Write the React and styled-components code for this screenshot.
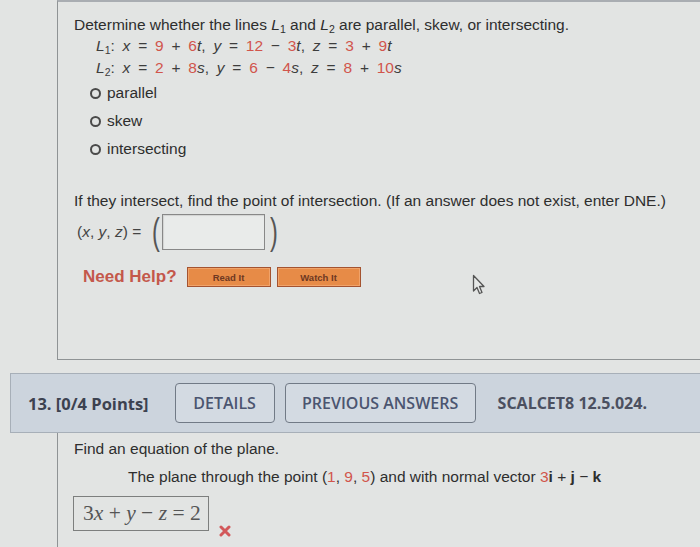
import React from "react";
import styled, { createGlobalStyle } from "styled-components";

const GlobalStyle = createGlobalStyle`
  body {
    margin: 0;
    background: #e2e4e3;
    font-family: "Liberation Sans", Arial, sans-serif;
    color: #2e2e2e;
  }
`;

const Page = styled.div`
  width: 700px;
  height: 547px;
  overflow: hidden;
  display: flex;
  flex-direction: column;
`;

const Panel = styled.div`
  position: relative;
  margin-left: 57px;
  border-left: 1px solid #8f9395;
  border-top: ${(props) => (props.top ? "2px solid #a9adb2" : "none")};
  border-bottom: ${(props) => (props.bottom ? "1px solid #8f9395" : "none")};
  padding: ${(props) => props.padding || "0"};
  padding-left: 16px;
  display: flex;
  flex-direction: column;
  flex: ${(props) => (props.grow ? "1" : "none")};
`;

const Text = styled.div`
  font-size: 15.5px;
  line-height: 20px;
  color: #2e2e2e;
  margin: ${(props) => props.margin || "0"};
  white-space: nowrap;
`;

const Var = styled.i`
  font-style: italic;
`;

const Sub = styled.sub`
  font-size: 10.5px;
  font-style: normal;
  line-height: 0;
  vertical-align: -3px;
`;

const Red = styled.span`
  color: #d1554c;
`;

const Bold = styled.b`
  font-weight: 700;
`;

const Equations = styled.div`
  margin-left: 22px;
  display: flex;
  flex-direction: column;
`;

const EqLine = styled.div`
  font-size: 15.5px;
  line-height: 22px;
  height: 22px;
  color: #3d3d3d;
  word-spacing: 3.5px;
  white-space: nowrap;
`;

const Options = styled.div`
  display: flex;
  flex-direction: column;
  margin-left: 16px;
`;

const Option = styled.label`
  display: flex;
  align-items: center;
  gap: 6px;
  height: 28px;
  font-size: 15.5px;
  color: #2e2e2e;
`;

const Radio = styled.span`
  width: 7px;
  height: 7px;
  border: 2px solid #4a4a4a;
  border-radius: 50%;
`;

const AnswerRow = styled.div`
  display: flex;
  align-items: center;
  height: 38px;
  margin: 2px 0 0 3px;
  font-size: 15.5px;
  color: #444;
  white-space: pre;
`;

const Paren = styled.span`
  font-size: 36px;
  font-weight: 300;
  line-height: 38px;
  color: #555;
  margin: ${(props) => props.margin || "0"};
  transform: scaleX(0.65);
`;

const InputBox = styled.div`
  width: 101px;
  height: 34px;
  border: 1px solid #888;
  background: #e9ebea;
  box-shadow: inset 1px 1px 1px rgba(0, 0, 0, 0.1);
`;

const HelpRow = styled.div`
  display: flex;
  align-items: center;
  height: 24px;
  margin: 14px 0 0 9px;
`;

const HelpLabel = styled.span`
  font-size: 17px;
  font-weight: 700;
  color: #c4584b;
  margin-right: 10px;
`;

const HelpButton = styled.span`
  width: 82px;
  height: 18px;
  margin-right: 6px;
  display: flex;
  align-items: center;
  justify-content: center;
  background: #e78b47;
  border: 1px solid #a45330;
  box-shadow: inset 0 0 0 1px #f0a36a;
  font-size: 9.5px;
  font-weight: 700;
  color: #6e3822;
`;

const Cursor = styled.svg`
  position: absolute;
  left: 414px;
  top: 272px;
`;

const Header = styled.div`
  margin: 13px 0 0 10px;
  height: 58px;
  background: #ccd4dd;
  border: 1px solid #a7afb8;
  border-right: none;
  display: flex;
  align-items: center;
  padding-left: 17px;
  font-family: "Open Sans", "Liberation Sans", sans-serif;
`;

const QNumber = styled.span`
  font-size: 16.5px;
  font-weight: 700;
  color: #3c4250;
  margin-right: 26px;
  white-space: nowrap;
`;

const HeaderButton = styled.span`
  width: ${(props) => props.w}px;
  height: 38px;
  display: flex;
  align-items: center;
  justify-content: center;
  border: 1px solid #717a86;
  border-radius: 4px;
  background: #d3dae2;
  font-size: 16px;
  font-weight: 600;
  color: #4b5570;
  margin-right: ${(props) => props.mr || "0"};
  white-space: nowrap;
`;

const Source = styled.span`
  font-size: 16px;
  font-weight: 700;
  color: #4b5060;
  white-space: nowrap;
`;

const MathAnswerRow = styled.div`
  display: flex;
  align-items: flex-end;
  margin-top: 9px;
`;

const MathBox = styled.div`
  height: 33px;
  border: 1px solid #7d7f7e;
  padding: 0 7px 0 9px;
  display: flex;
  align-items: center;
  margin-left: -1px;
  font-family: "Liberation Serif", "Times New Roman", serif;
  font-size: 21.5px;
  color: #555;
  white-space: nowrap;
`;

const MathVar = styled.i`
  font-style: italic;
`;

const WrongMark = styled.svg`
  margin: 0 0 -6px 10px;
`;

export default function App() {
  return (
    <Page>
      <GlobalStyle />
      <Panel top bottom padding="13px 0 70px">
        <Text>
          Determine whether the lines <Var>L<Sub>1</Sub></Var> and <Var>L<Sub>2</Sub></Var> are
          parallel, skew, or intersecting.
        </Text>
        <Equations>
          <EqLine>
            <Var>L<Sub>1</Sub></Var>: <Var>x</Var> = <Red>9</Red> + <Red>6</Red><Var>t</Var>,{" "}
            <Var>y</Var> = <Red>12</Red> − <Red>3</Red><Var>t</Var>, <Var>z</Var> ={" "}
            <Red>3</Red> + <Red>9</Red><Var>t</Var>
          </EqLine>
          <EqLine>
            <Var>L<Sub>2</Sub></Var>: <Var>x</Var> = <Red>2</Red> + <Red>8</Red><Var>s</Var>,{" "}
            <Var>y</Var> = <Red>6</Red> − <Red>4</Red><Var>s</Var>, <Var>z</Var> ={" "}
            <Red>8</Red> + <Red>10</Red><Var>s</Var>
          </EqLine>
        </Equations>
        <Options>
          <Option><Radio />parallel</Option>
          <Option><Radio />skew</Option>
          <Option><Radio />intersecting</Option>
        </Options>
        <Text margin="28px 0 0">
          If they intersect, find the point of intersection. (If an answer does not exist, enter DNE.)
        </Text>
        <AnswerRow>
          (<Var>x</Var>, <Var>y</Var>, <Var>z</Var>) =
          <Paren margin="0 0 0 9px">(</Paren>
          <InputBox />
          <Paren margin="0 0 0 3px">)</Paren>
        </AnswerRow>
        <HelpRow>
          <HelpLabel>Need Help?</HelpLabel>
          <HelpButton>Read It</HelpButton>
          <HelpButton>Watch It</HelpButton>
        </HelpRow>
        <Cursor width="13" height="22" viewBox="0 0 13 22">
          <path
            d="M1.5 1.5 L1.5 17 L5 13.5 L7.5 19.5 L10 18.5 L7.5 12.5 L12 12.5 Z"
            fill="#e6e8e7"
            stroke="#555"
            strokeWidth="1.3"
            strokeLinejoin="round"
          />
        </Cursor>
      </Panel>

      <Header>
        <QNumber>13. [0/4 Points]</QNumber>
        <HeaderButton w={98} mr="10px">DETAILS</HeaderButton>
        <HeaderButton w={189} mr="22px">PREVIOUS ANSWERS</HeaderButton>
        <Source>SCALCET8 12.5.024.</Source>
      </Header>

      <Panel grow padding="6px 0 0">
        <Text>Find an equation of the plane.</Text>
        <Text margin="8px 0 0 54px">
          The plane through the point (<Red>1</Red>, <Red>9</Red>, <Red>5</Red>) and with normal
          vector <Red>3</Red><Bold>i</Bold> + <Bold>j</Bold> − <Bold>k</Bold>
        </Text>
        <MathAnswerRow>
          <MathBox>
            3<MathVar>x</MathVar>&nbsp;+&nbsp;<MathVar>y</MathVar>&nbsp;−&nbsp;<MathVar>z</MathVar>&nbsp;=&nbsp;2
          </MathBox>
          <WrongMark width="12" height="12" viewBox="0 0 12 12">
            <path d="M2 2 L10 10 M10 2 L2 10" stroke="#d2585a" strokeWidth="3" strokeLinecap="round" />
          </WrongMark>
        </MathAnswerRow>
      </Panel>
    </Page>
  );
}
